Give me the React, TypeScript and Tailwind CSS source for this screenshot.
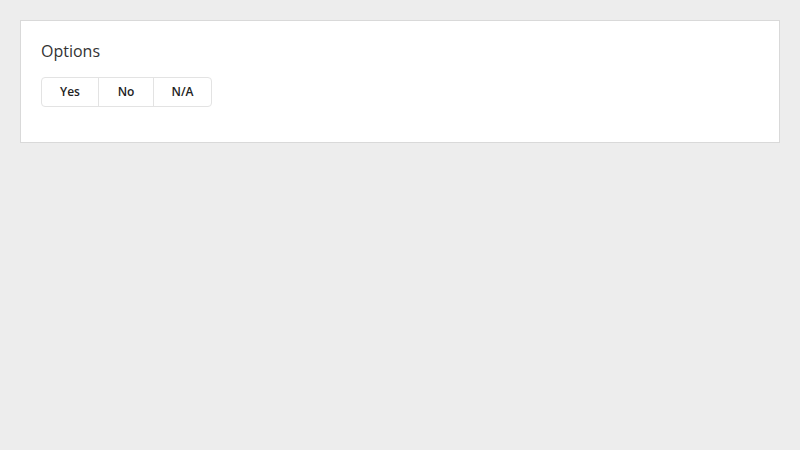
const App = () => {
  return (
    <div className="min-h-screen bg-[#ededed] p-5 font-['Open_Sans',sans-serif]">
      <div className="bg-white border border-[#d9d9d9] px-5 pt-[18px] pb-[35px]">
        <h2 className="text-[16px] leading-6 font-medium text-[#333] mb-[14px]">Options</h2>
        <div className="inline-flex border border-[#e3e3e3] rounded-[4px] h-[30px] text-[12px] font-semibold text-[#222]">
          <button className="w-[56px] flex items-center justify-center">Yes</button>
          <button className="w-[55px] flex items-center justify-center border-l border-[#e3e3e3]">No</button>
          <button className="w-[58px] flex items-center justify-center border-l border-[#e3e3e3]">N/A</button>
        </div>
      </div>
    </div>
  );
};

export default App;
